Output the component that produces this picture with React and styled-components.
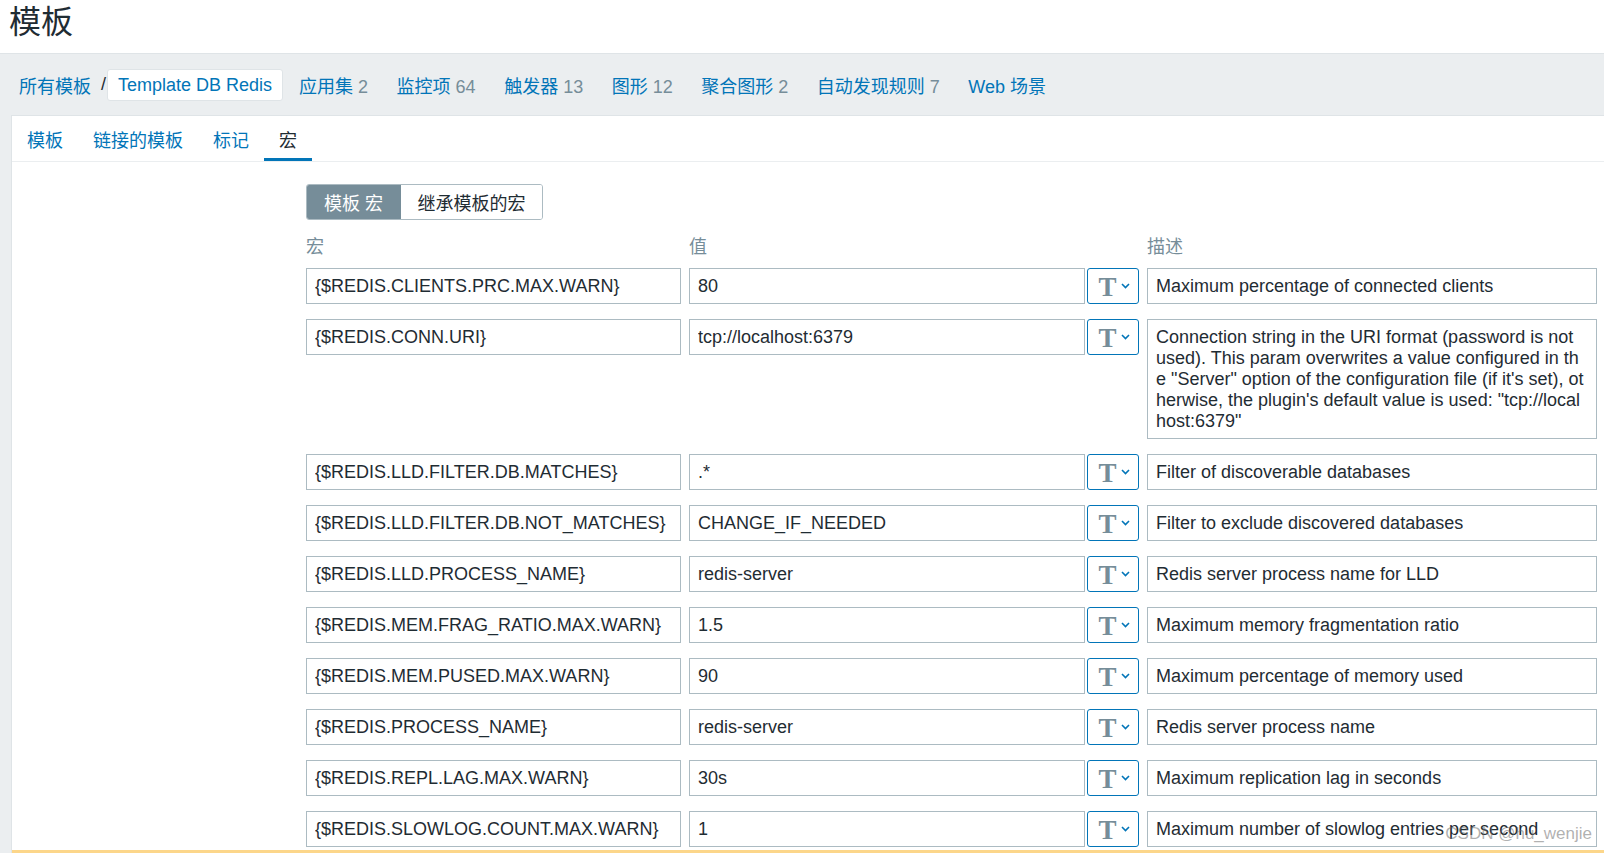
import styled, { createGlobalStyle } from 'styled-components';

const GlobalStyle = createGlobalStyle`
   html, body {
      margin: 0;
      padding: 0;
      height: 853px;
      overflow: hidden;
      background: #ebeef0;
      font-family: "Liberation Sans", Arial, "Noto Sans CJK SC", sans-serif;
      color: #1f2c33;
   }
   * {
      box-sizing: border-box;
   }
`;

const Page = styled.div`
   position: relative;
   width: 1604px;
   height: 853px;
   display: flex;
   flex-direction: column;
`;

const Header = styled.header`
   height: 54px;
   background: #fff;
   border-bottom: 1px solid #dfe4e7;
   display: flex;
   align-items: center;
   padding-left: 9px;
`;

const Title = styled.h1`
   margin: 0;
   font-size: 32px;
   font-weight: normal;
   line-height: 44px;
   color: #1f2c33;
   margin-top: -10px;
`;

const NavBar = styled.nav`
   height: 61px;
   display: flex;
   align-items: center;
   padding-left: 19px;
   font-size: 18px;
`;

const Crumb = styled.a`
   color: #0275b8;
   text-decoration: none;
`;

const Slash = styled.span`
   color: #1f2c33;
   margin: 0 1px 0 10px;
`;

const CurrentCrumb = styled.span`
   color: #0275b8;
   background: #fff;
   border: 1px solid #dfe4e7;
   border-radius: 3px;
   height: 32px;
   display: flex;
   align-items: center;
   padding: 1px 10px 0;
   margin-right: 16px;
`;

const NavLinks = styled.div`
   display: flex;
   gap: 28.5px;
`;

const NavLink = styled.a`
   color: #0275b8;
   text-decoration: none;
   white-space: nowrap;
`;

const Count = styled.span`
   color: #768d99;
   margin-left: 5px;
`;

const Panel = styled.main`
   flex: 1;
   margin-left: 11px;
   background: #fff;
   border-top: 1px solid #dfe4e7;
   border-left: 1px solid #dfe4e7;
   display: flex;
   flex-direction: column;
   overflow: hidden;
`;

const Tabs = styled.div`
   height: 46px;
   display: flex;
   border-bottom: 1px solid #ebeef0;
   font-size: 18px;
`;

const Tab = styled.a`
   padding: 0 15px;
   display: flex;
   align-items: center;
   color: ${(p) => (p.$active ? '#1f2c33' : '#0275b8')};
   border-bottom: 3px solid ${(p) => (p.$active ? '#0275b8' : 'transparent')};
   padding-top: 3px;
   text-decoration: none;
`;

const FormLayout = styled.div`
   flex: 1;
   display: grid;
   grid-template-columns: 282px auto;
   column-gap: 12px;
   padding-top: 22px;
`;

const Fields = styled.div`
   display: flex;
   flex-direction: column;
`;

const Segmented = styled.div`
   display: flex;
   height: 36px;
   width: max-content;
   border: 1px solid #acbbc2;
   border-radius: 3px;
   overflow: hidden;
   font-size: 18px;
`;

const Segment = styled.span`
   display: flex;
   align-items: center;
   padding: 0 ${(p) => (p.$active ? '18px' : '16.5px')};
   background: ${(p) => (p.$active ? '#768d99' : '#fff')};
   color: ${(p) => (p.$active ? '#fff' : '#1f2c33')};
   margin: ${(p) => (p.$active ? '-1px 0 -1px -1px' : '0')};
`;

const MacroGrid = styled.div`
   display: grid;
   grid-template-columns: 375px 450px 450px auto;
   column-gap: 8px;
   row-gap: 15px;
   margin-top: 17px;
   font-size: 18px;
`;

const ColHead = styled.div`
   color: #768d99;
   line-height: 21px;
   margin-bottom: -5px;
`;

const TextBox = styled.input`
   width: 100%;
   height: 36px;
   border: 1px solid #acbbc2;
   border-radius: 0;
   padding: 0 8px;
   font: inherit;
   color: #1f2c33;
   background: #fff;
   outline: none;
`;

const ValueGroup = styled.div`
   display: flex;
   gap: 2px;
   align-self: start;
`;

const TypeButton = styled.button`
   flex: none;
   width: 52px;
   height: 36px;
   border: 1px solid #0275b8;
   border-radius: 3px;
   background: #fff;
   display: flex;
   align-items: center;
   justify-content: center;
   gap: 4px;
   padding: 0 0 0 2px;
`;

const TypeGlyph = styled.span`
   font-family: "Liberation Serif", "Times New Roman", serif;
   font-weight: bold;
   font-size: 27px;
   line-height: 1;
   color: #768d99;
   margin-top: 2px;
`;

const Description = styled.div`
   border: 1px solid #acbbc2;
   padding: 6.5px 8px;
   line-height: 21px;
   min-height: 36px;
   word-break: break-all;
   color: #1f2c33;
`;

const RemoveLink = styled.a`
   color: #0275b8;
   line-height: 36px;
   white-space: nowrap;
`;

const FooterLine = styled.div`
   flex: none;
   height: 3px;
   background: #fcd68a;
`;

const Watermark = styled.span`
   position: absolute;
   right: 12px;
   bottom: 9px;
   font-size: 17px;
   color: rgba(110, 110, 110, 0.55);
   font-family: "Liberation Sans", Arial, sans-serif;
`;

const navItems = [
   ['应用集', '2'],
   ['监控项', '64'],
   ['触发器', '13'],
   ['图形', '12'],
   ['聚合图形', '2'],
   ['自动发现规则', '7'],
   ['Web 场景', null],
];

const macros = [
   ['{$REDIS.CLIENTS.PRC.MAX.WARN}', '80', 'Maximum percentage of connected clients'],
   [
      '{$REDIS.CONN.URI}',
      'tcp://localhost:6379',
      'Connection string in the URI format (password is not used). This param overwrites a value configured in the "Server" option of the configuration file (if it\'s set), otherwise, the plugin\'s default value is used: "tcp://localhost:6379"',
   ],
   ['{$REDIS.LLD.FILTER.DB.MATCHES}', '.*', 'Filter of discoverable databases'],
   ['{$REDIS.LLD.FILTER.DB.NOT_MATCHES}', 'CHANGE_IF_NEEDED', 'Filter to exclude discovered databases'],
   ['{$REDIS.LLD.PROCESS_NAME}', 'redis-server', 'Redis server process name for LLD'],
   ['{$REDIS.MEM.FRAG_RATIO.MAX.WARN}', '1.5', 'Maximum memory fragmentation ratio'],
   ['{$REDIS.MEM.PUSED.MAX.WARN}', '90', 'Maximum percentage of memory used'],
   ['{$REDIS.PROCESS_NAME}', 'redis-server', 'Redis server process name'],
   ['{$REDIS.REPL.LAG.MAX.WARN}', '30s', 'Maximum replication lag in seconds'],
   ['{$REDIS.SLOWLOG.COUNT.MAX.WARN}', '1', 'Maximum number of slowlog entries per second'],
];

function Chevron() {
   return (
      <svg width="9" height="6" viewBox="0 0 9 6">
         <polyline points="1,1 4.5,4.5 8,1" fill="none" stroke="#0275b8" strokeWidth="1.6" />
      </svg>
   );
}

function App() {
   return (
      <Page>
         <GlobalStyle />
         <Header>
            <Title>模板</Title>
         </Header>
         <NavBar>
            <Crumb>所有模板</Crumb>
            <Slash>/</Slash>
            <CurrentCrumb>Template DB Redis</CurrentCrumb>
            <NavLinks>
               {navItems.map(([label, count]) => (
                  <NavLink key={label}>
                     {label}
                     {count && <Count>{count}</Count>}
                  </NavLink>
               ))}
            </NavLinks>
         </NavBar>
         <Panel>
            <Tabs>
               <Tab>模板</Tab>
               <Tab>链接的模板</Tab>
               <Tab>标记</Tab>
               <Tab $active>宏</Tab>
            </Tabs>
            <FormLayout>
               <div />
               <Fields>
                  <Segmented>
                     <Segment $active>模板 宏</Segment>
                     <Segment>继承模板的宏</Segment>
                  </Segmented>
                  <MacroGrid>
                     <ColHead>宏</ColHead>
                     <ColHead>值</ColHead>
                     <ColHead>描述</ColHead>
                     <div />
                     {macros.map(([name, value, desc]) => (
                        <>
                           <TextBox key={name} readOnly value={name} />
                           <ValueGroup>
                              <TextBox readOnly value={value} />
                              <TypeButton>
                                 <TypeGlyph>T</TypeGlyph>
                                 <Chevron />
                              </TypeButton>
                           </ValueGroup>
                           <Description>{desc}</Description>
                           <RemoveLink>移除</RemoveLink>
                        </>
                     ))}
                  </MacroGrid>
               </Fields>
            </FormLayout>
            <FooterLine />
         </Panel>
         <Watermark>CSDN @hu_wenjie</Watermark>
      </Page>
   );
}

export default App;
